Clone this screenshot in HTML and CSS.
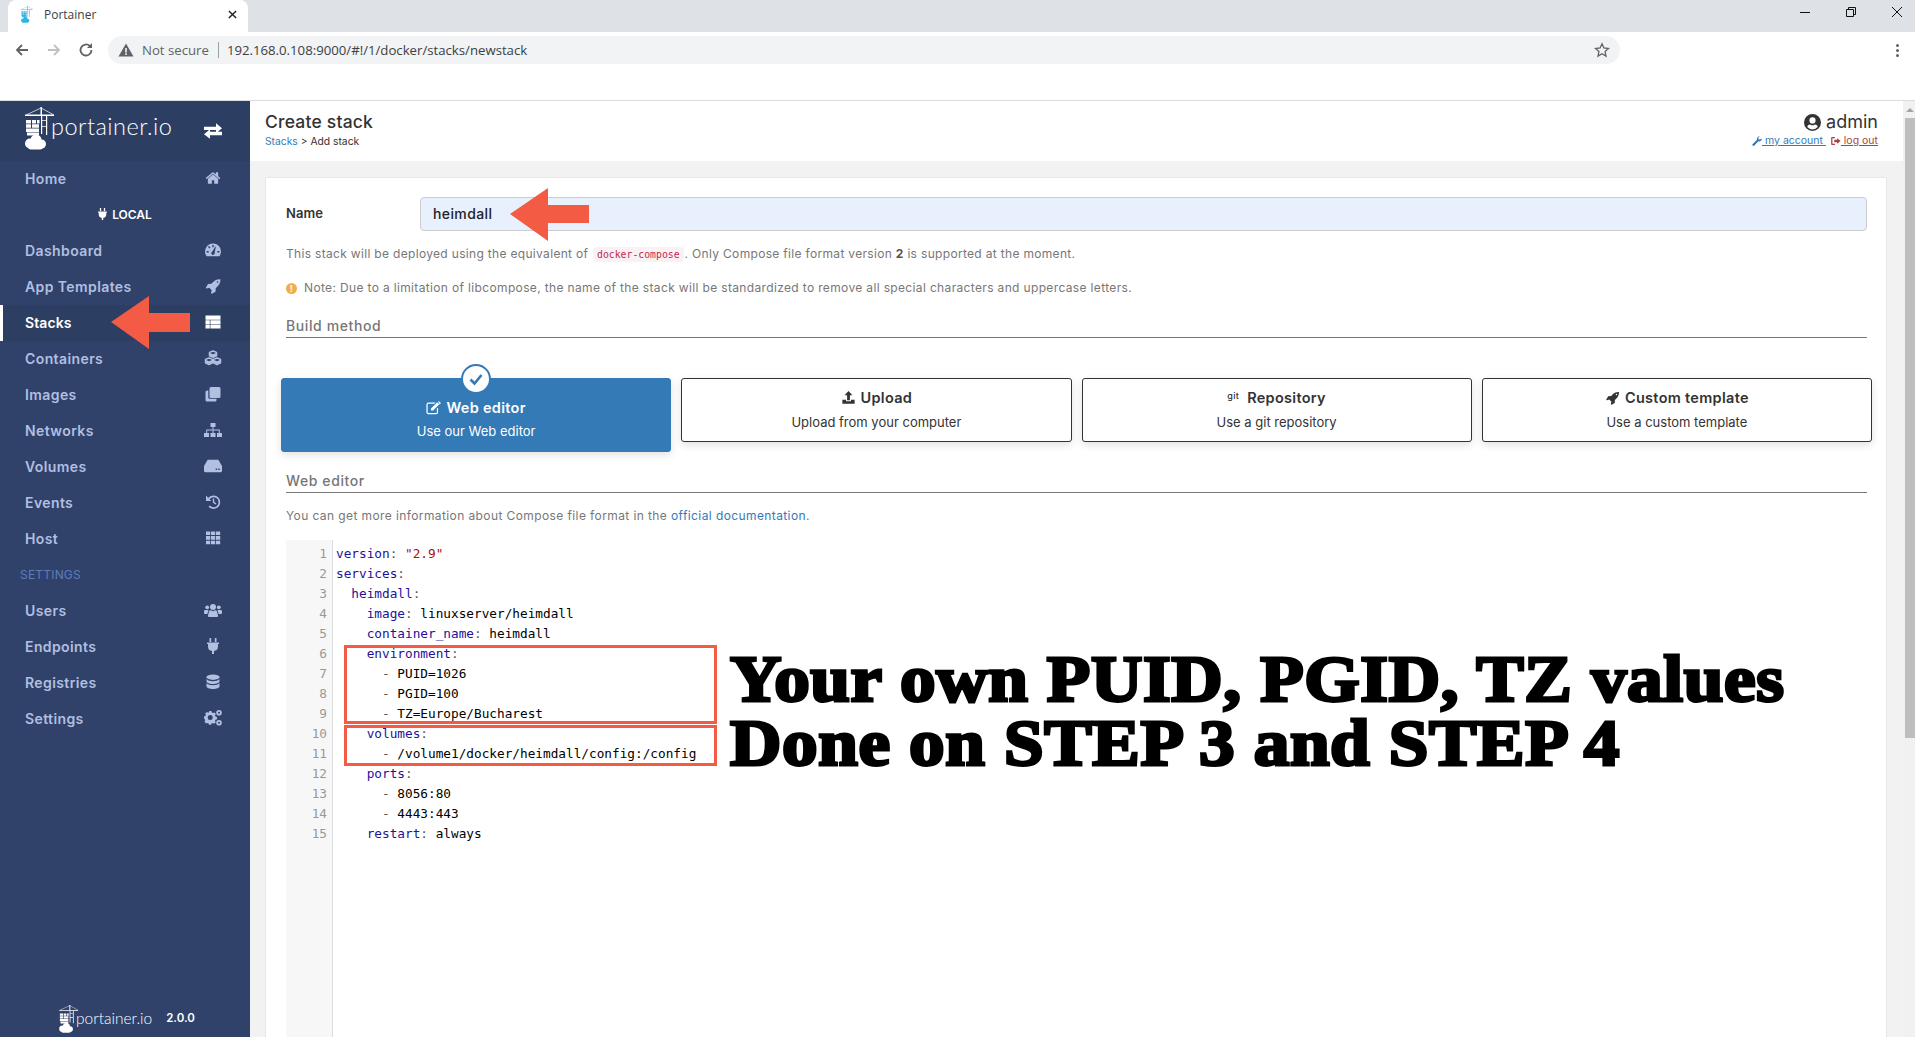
FILE: index.html
```html
<!DOCTYPE html>
<html lang="en">
<head>
<meta charset="utf-8">
<title>Portainer</title>
<link rel="stylesheet" href="styles.css">
</head>
<body>
<svg class="sprite" xmlns="http://www.w3.org/2000/svg">
  <symbol id="i-logo" viewBox="0 0 30 43">
    <path d="M0 7.500H29V9H0zM15.500 0h1.500v8h-1.500z"/>
    <path d="M1 8 16 1 29 8" fill="none" stroke="currentColor" stroke-width=".7"/>
    <path d="M16 9h1.200v18H16zM21 9h1.200v19H21zM16 13h6v.8h-6zM16 19h6v.8h-6z"/>
    <path d="M1 13h5v3.500H1zM7 13h4v3.500H7zM1 17.300h5v3.500H1zM7 17.300h7v3.500H7zM1 21.600h13v3.500H1zM12 13h2.500v3.500H12z"/>
    <path d="M2 25.500h12v3H2z"/>
    <circle cx="5" cy="36.500" r="5"/><circle cx="11" cy="33" r="5.500"/><circle cx="16.500" cy="37" r="4.500"/>
    <rect x="3" y="36" width="15" height="6.500" rx="3"/>
  </symbol>
  <symbol id="i-home" viewBox="0 0 1792 1792"><path d="M1472 992v480q0 26-19 45t-45 19h-384v-384h-256v384h-384q-26 0-45-19t-19-45v-480q0-1 .5-3t.5-3l575-474 575 474q1 2 1 6zm223-69l-62 74q-8 9-21 11h-3q-13 0-21-7l-692-577-692 577q-12 8-24 7-13-2-21-11l-62-74q-8-10-7-23.500t11-21.500l719-599q32-26 76-26t76 26l244 204v-195q0-14 9-23t23-9h192q14 0 23 9t9 23v408l219 182q10 8 11 21.500t-7 23.500z"/></symbol>
  <symbol id="i-rocket" viewBox="0 0 1792 1792"><path d="M1504 448q0-40-28-68t-68-28-68 28-28 68 28 68 68 28 68-28 28-68zm224-288q0 249-75.500 430.500t-253.500 360.500q-81 80-195 176l-20 379q-2 16-16 26l-384 224q-7 4-16 4-12 0-23-9l-64-64q-13-14-8-32l85-276-281-281-276 85q-3 1-9 1-14 0-23-9l-64-64q-17-19-5-39l224-384q10-14 26-16l379-20q96-114 176-195 188-187 358-258t431-71q14 0 24 9.500t10 22.500z"/></symbol>
  <symbol id="i-gauge" viewBox="0 0 16 16"><path fill-rule="evenodd" d="M8 1.500a7.800 7.800 0 0 1 8 7.800c0 1.900-.6 3.500-1.600 4.900H1.600A8 8 0 0 1 0 9.300 7.800 7.800 0 0 1 8 1.500zM7.300 3v2.200h1.400V3zM3 5l1.500 1.500 1-1L4 4zM11 4 9.800 5.400 7.400 9.600a1.700 1.700 0 1 0 2.300 1.200zM1.500 9v1.400h2.200V9zM12.300 9v1.400h2.200V9z"/></symbol>
  <symbol id="i-table" viewBox="0 0 16 16"><path d="M.5 1.500h15v4.200H.5zM.5 6.300h4.300v3.700H.5zM5.400 6.300h10.100v3.700H5.400zM.5 10.600h4.300v3.900H.5zM5.400 10.600h10.100v3.900H5.400z"/></symbol>
  <symbol id="i-cubes" viewBox="0 0 18 16"><g fill="none" stroke="currentColor" stroke-width="1.500" stroke-linejoin="round"><path d="m9 1 3.500 1.400v3.400L9 7.200 5.500 5.800V2.400z"/><path d="m5 8 3.500 1.400v3.400L5 14.500l-3.500-1.700V9.400z"/><path d="m13 8 3.500 1.400v3.400L13 14.500l-3.500-1.700V9.400z"/></g><path d="M6 3 9 4.200 12 3v2.500L9 7 6 5.500zM2 10l3 1.200L8 10v2.500L5 14l-3-1.500zM10 10l3 1.200 3-1.200v2.500L13 14l-3-1.500z"/></symbol>
  <symbol id="i-clone" viewBox="0 0 16 16"><path d="M6 1h8a1.500 1.500 0 0 1 1.500 1.500v8A1.500 1.500 0 0 1 14 12H6a1.500 1.500 0 0 1-1.500-1.500v-8A1.500 1.500 0 0 1 6 1z"/><path d="M3.300 4.500v7a1.200 1.200 0 0 0 1.200 1.200h7V14a1.500 1.500 0 0 1-1.500 1.500H2A1.500 1.500 0 0 1 .5 14V6A1.500 1.500 0 0 1 2 4.500z"/></symbol>
  <symbol id="i-sitemap" viewBox="0 0 18 16"><path d="M6.500 1h5v4h-5zM0 11h5v4H0zM6.500 11h5v4h-5zM13 11h5v4h-5z"/><path d="M8.500 5h1v2.500h6.300V11h-1V8.500H9.500V11h-1V8.500H3.200V11h-1V7.500h6.300z"/></symbol>
  <symbol id="i-hdd" viewBox="0 0 17 14"><path fill-rule="evenodd" d="M3.500 1h10L17 7v4.500a1.500 1.500 0 0 1-1.500 1.500h-14A1.500 1.500 0 0 1 0 11.500V7zM11 9.300v1.400h1.400V9.300zM13.500 9.300v1.400h1.400V9.300z"/></symbol>
  <symbol id="i-history" viewBox="0 0 16 16"><path d="M8.500 1.500a6.700 6.700 0 1 1-5 11.200l1.300-1.200A5 5 0 1 0 4.500 5.200L3 4a6.700 6.700 0 0 1 5.500-2.500z"/><path d="M7.800 4.500h1.400v3.300l2.200 1.700-.9 1.100-2.700-2.100z"/><path d="M1 1.500 6.300 7H1z"/></symbol>
  <symbol id="i-th" viewBox="0 0 16 16"><path d="M1 1.500h4.200v3.600H1zM6 1.500h4.200v3.600H6zM11 1.500h4.200v3.600H11zM1 6.100h4.200v3.600H1zM6 6.100h4.200v3.600H6zM11 6.100h4.200v3.600H11zM1 10.700h4.200v3.600H1zM6 10.700h4.200v3.600H6zM11 10.700h4.200v3.600H11z"/></symbol>
  <symbol id="i-users" viewBox="0 0 18 14"><circle cx="9" cy="4" r="3"/><path d="M5 8.500a2 2 0 0 1 2-1.300l2 1 2-1a2 2 0 0 1 2 1.300l1 4a1 1 0 0 1-1 1.500H5a1 1 0 0 1-1-1.500z"/><circle cx="3.200" cy="4.300" r="1.900"/><circle cx="14.800" cy="4.300" r="1.900"/><path d="M0 10v-1.500C0 7 1 6.700 3 7l1.600.2-1.300 3.800H1a1 1 0 0 1-1-1zM18 10V8.500C18 7 17 6.700 15 7l-1.600.2 1.300 3.800H17a1 1 0 0 0 1-1z"/></symbol>
  <symbol id="i-plug" viewBox="0 0 12 16"><path d="M2.500 0h1.700v4H2.500zM7.800 0h1.700v4H7.800zM0 4.500h12v1.500H11v2.500A4.500 4.500 0 0 1 7 13v3H5v-3A4.500 4.500 0 0 1 1 8.500V6H0z"/></symbol>
  <symbol id="i-db" viewBox="0 0 14 16"><ellipse cx="7" cy="3.200" rx="6.500" ry="2.700"/><path d="M.5 5c1 1.600 3.600 2.200 6.500 2.200S12.500 6.600 13.500 5v2.300C13.500 9 10.600 10 7 10S.5 9 .5 7.300z"/><path d="M.5 9c1 1.600 3.600 2.200 6.500 2.200s5.500-.6 6.500-2.200v3.300C13.500 14 10.600 15 7 15S.5 14 .5 12.300z"/></symbol>
  <symbol id="i-cogs" viewBox="0 0 18 16"><path fill-rule="evenodd" d="M5 3h2.400l.4 1.500 1.300.6 1.400-.7 1.400 1.600-.9 1.300.5 1.300 1.500.5v2.100l-1.500.5-.5 1.300.8 1.300-1.600 1.500-1.300-.8-1.300.5-.5 1.300H5l-.4-1.400-1.300-.5-1.300.7L.5 13.500l.7-1.300-.5-1.300L0 10.600V8.400l1.400-.4.5-1.300-.7-1.300L2.800 4l1.300.7 1-.5zM6.200 7a2.500 2.500 0 1 0 0 5 2.500 2.500 0 0 0 0-5z" transform="translate(0 -2)"/><path fill-rule="evenodd" d="M15 0a2.800 2.800 0 1 1 0 5.600A2.800 2.800 0 0 1 15 0zm0 1.800a1 1 0 1 0 0 2 1 1 0 0 0 0-2zM15 10a2.800 2.800 0 1 1 0 5.600 2.800 2.800 0 0 1 0-5.600zm0 1.800a1 1 0 1 0 0 2 1 1 0 0 0 0-2z"/></symbol>
  <symbol id="i-swap" viewBox="0 0 18 16"><path d="M0 3.500h12V0l6 5-6 5V6.800H0zM18 8.500V12H6v3.500L0 11l6-5v2.500z" transform="translate(0 .3)"/></symbol>
  <symbol id="i-edit" viewBox="0 0 18 16"><path d="M3 1.500h8.500L10 3H3a1 1 0 0 0-1 1v9a1 1 0 0 0 1 1h9a1 1 0 0 0 1-1V9l1.500-1.500V13a2.500 2.500 0 0 1-2.500 2.500H3A2.500 2.500 0 0 1 .5 13V4A2.500 2.500 0 0 1 3 1.500z"/><path d="M6 8.500 13.500 1 16 3.500 8.500 11H6zM14.500 0l1-.2 2 2v1l-1 1z"/></symbol>
  <symbol id="i-upload" viewBox="0 0 14 16"><path d="M7 0l4.500 4.800H8.600V10.500H5.400V4.800H2.500zM0 10h4.200v1.700h5.600V10H14v4.500H0z"/></symbol>
  <symbol id="i-wrench" viewBox="0 0 14 14"><path d="M14 3.500A4 4 0 0 1 9 7.400L3 13.500a1.400 1.400 0 0 1-2-.1 1.400 1.400 0 0 1-.2-2L7 5.200A4 4 0 0 1 11 .2L8.800 2.500l.4 2 2 .5z"/></symbol>
  <symbol id="i-signout" viewBox="0 0 14 14"><path d="M1.500 1.500h4v1.600h-3.500v7.800H5.500v1.600h-4A1.300 1.300 0 0 1 .2 11.200V2.800a1.300 1.300 0 0 1 1.300-1.300z"/><path d="M8.500 3 13.500 7l-5 4V8.800H4.500V5.200H8.500z"/></symbol>
  <symbol id="i-user" viewBox="0 0 18 18"><path fill-rule="evenodd" d="M9 0a9 9 0 1 1 0 18A9 9 0 0 1 9 0zm0 3.500a3.300 3.300 0 1 0 0 6.600 3.300 3.300 0 0 0 0-6.600zM3.500 13.800A7 7 0 0 0 9 16.300a7 7 0 0 0 5.500-2.500 3 3 0 0 0-3-2.800 4.300 4.300 0 0 1-5 0 3 3 0 0 0-3 2.800z"/></symbol>
</svg>

<header class="tabstrip">
  <div class="tab">
    <svg class="tab-icon"><use href="#i-logo"/></svg>
    <span class="tab-title">Portainer</span>
    <span class="tab-close">
      <svg viewBox="0 0 10 10" class="x-icon"><path d="M1 1l8 8M9 1l-8 8"/></svg>
    </span>
  </div>
  <div class="win-controls">
    <svg viewBox="0 0 12 12" class="win"><path d="M1 6.500h10"/></svg>
    <svg viewBox="0 0 12 12" class="win"><path d="M1.500 3.500h7v7h-7zM3.500 3.500v-2h7v7h-2"/></svg>
    <svg viewBox="0 0 12 12" class="win"><path d="M1 1l10 10M11 1 1 11"/></svg>
  </div>
</header>
<div class="toolbar">
  <svg viewBox="0 0 16 16" class="nav"><path d="M14 8H3M8 3 3 8l5 5"/></svg>
  <svg viewBox="0 0 16 16" class="nav nav-off"><path d="M2 8h11M8 3l5 5-5 5"/></svg>
  <svg viewBox="0 0 16 16" class="nav"><path d="M13.500 8a5.500 5.500 0 1 1-1.600-3.900"/><path class="nav-fill" d="M14 1v5H9z"/></svg>
  <div class="omnibox">
    <svg viewBox="0 0 16 16" class="warn"><path d="M8 1.500 15.500 14.500H.5zM7.200 6v4.500h1.600V6zM7.200 11.300v1.600h1.600v-1.600z" fill-rule="evenodd"/></svg>
    <span class="not-secure">Not secure</span>
    <span class="omni-sep"></span>
    <span class="url">192.168.0.108:9000/#!/1/docker/stacks/newstack</span>
    <svg viewBox="0 0 16 16" class="star"><path d="m8 1.800 1.900 4.200 4.600.5-3.400 3.100.9 4.500L8 11.800l-4 2.300.9-4.500L1.500 6.500 6.100 6z"/></svg>
  </div>
  <div class="dots"><i></i><i></i><i></i></div>
</div>

<div class="app">
  <aside class="sidebar">
    <div class="brand">
      <svg class="brand-logo"><use href="#i-logo"/></svg>
      <span class="brand-text">portainer.io</span>
      <svg class="brand-swap"><use href="#i-swap"/></svg>
    </div>
    <nav class="nav-list">
      <a class="nav-item"><span>Home</span><svg class="ni"><use href="#i-home"/></svg></a>
      <div class="nav-local"><svg class="plug"><use href="#i-plug"/></svg>LOCAL</div>
      <a class="nav-item"><span>Dashboard</span><svg class="ni"><use href="#i-gauge"/></svg></a>
      <a class="nav-item"><span>App Templates</span><svg class="ni"><use href="#i-rocket"/></svg></a>
      <a class="nav-item active"><span>Stacks</span><svg class="ni"><use href="#i-table"/></svg></a>
      <a class="nav-item"><span>Containers</span><svg class="ni"><use href="#i-cubes"/></svg></a>
      <a class="nav-item"><span>Images</span><svg class="ni"><use href="#i-clone"/></svg></a>
      <a class="nav-item"><span>Networks</span><svg class="ni"><use href="#i-sitemap"/></svg></a>
      <a class="nav-item"><span>Volumes</span><svg class="ni"><use href="#i-hdd"/></svg></a>
      <a class="nav-item"><span>Events</span><svg class="ni"><use href="#i-history"/></svg></a>
      <a class="nav-item"><span>Host</span><svg class="ni"><use href="#i-th"/></svg></a>
      <div class="nav-title">SETTINGS</div>
      <a class="nav-item"><span>Users</span><svg class="ni"><use href="#i-users"/></svg></a>
      <a class="nav-item"><span>Endpoints</span><svg class="ni"><use href="#i-plug"/></svg></a>
      <a class="nav-item"><span>Registries</span><svg class="ni"><use href="#i-db"/></svg></a>
      <a class="nav-item"><span>Settings</span><svg class="ni"><use href="#i-cogs"/></svg></a>
    </nav>
    <div class="side-foot">
      <svg class="foot-logo"><use href="#i-logo"/></svg>
      <span class="foot-text">portainer.io</span>
      <span class="foot-ver">2.0.0</span>
    </div>
  </aside>

  <main class="main">
    <div class="page-head">
      <div>
        <div class="page-title">Create stack</div>
        <div class="crumbs"><a class="link">Stacks</a> &gt; Add stack</div>
      </div>
      <div class="account">
        <div class="acc-user"><svg class="acc-icon"><use href="#i-user"/></svg>admin</div>
        <div class="acc-links">
          <svg class="mini blue"><use href="#i-wrench"/></svg><a class="u blue">&nbsp;my account&nbsp;</a>
          <svg class="mini red gap"><use href="#i-signout"/></svg><a class="u red">&nbsp;log out</a>
        </div>
      </div>
    </div>
    <div class="content">
      <section class="card">
        <div class="name-row">
          <label class="name-label">Name</label>
          <div class="name-input">heimdall</div>
        </div>
        <p class="help first">This stack will be deployed using the equivalent of <code class="inline">docker-compose</code>. Only Compose file format version <b>2</b> is supported at the moment.</p>
        <p class="help note"><span class="note-dot">!</span>Note: Due to a limitation of libcompose, the name of the stack will be standardized to remove all special characters and uppercase letters.</p>
        <h3 class="section build">Build method</h3>
        <div class="methods">
          <div class="method on">
            <span class="check"><svg viewBox="0 0 16 16"><path d="M2.500 8.500 6.500 12.500 13.500 4"/></svg></span>
            <div class="m-title"><svg class="m-icon"><use href="#i-edit"/></svg>Web editor</div>
            <div class="m-sub">Use our Web editor</div>
          </div>
          <div class="method">
            <div class="m-title"><svg class="m-icon"><use href="#i-upload"/></svg>Upload</div>
            <div class="m-sub">Upload from your computer</div>
          </div>
          <div class="method">
            <div class="m-title"><span class="git">git</span>Repository</div>
            <div class="m-sub">Use a git repository</div>
          </div>
          <div class="method">
            <div class="m-title"><svg class="m-icon"><use href="#i-rocket"/></svg>Custom template</div>
            <div class="m-sub">Use a custom template</div>
          </div>
        </div>
        <h3 class="section web">Web editor</h3>
        <p class="help info">You can get more information about Compose file format in the <a class="link">official documentation</a>.</p>
        <div class="editor">
          <div class="gutter">
            <div>1</div><div>2</div><div>3</div><div>4</div><div>5</div><div>6</div><div>7</div><div>8</div><div>9</div><div>10</div><div>11</div><div>12</div><div>13</div><div>14</div><div>15</div>
          </div>
          <div class="code">
            <div><span class="k">version</span><span class="m">:</span> <span class="s">"2.9"</span></div>
            <div><span class="k">services</span><span class="m">:</span></div>
            <div>  <span class="k">heimdall</span><span class="m">:</span></div>
            <div>    <span class="k">image</span><span class="m">:</span> linuxserver/heimdall</div>
            <div>    <span class="k">container_name</span><span class="m">:</span> heimdall</div>
            <div>    <span class="k">environment</span><span class="m">:</span></div>
            <div>      <span class="m">-</span> PUID=1026</div>
            <div>      <span class="m">-</span> PGID=100</div>
            <div>      <span class="m">-</span> TZ=Europe/Bucharest</div>
            <div>    <span class="k">volumes</span><span class="m">:</span></div>
            <div>      <span class="m">-</span> /volume1/docker/heimdall/config:/config</div>
            <div>    <span class="k">ports</span><span class="m">:</span></div>
            <div>      <span class="m">-</span> 8056:80</div>
            <div>      <span class="m">-</span> 4443:443</div>
            <div>    <span class="k">restart</span><span class="m">:</span> always</div>
          </div>
        </div>
      </section>
    </div>
  </main>

  <div class="scrollbar">
    <span class="sb-up"></span>
    <div class="sb-thumb"></div>
  </div>
</div>

<svg class="marks" viewBox="0 0 1915 1037" xmlns="http://www.w3.org/2000/svg">
  <path class="arrow" d="M510 214 548 188V205H589V223H548V241z"/>
  <path class="arrow" d="M111 322 149 296V313H190V332H149V349z"/>
  <rect class="box" x="345.500" y="646.500" width="370" height="76"/>
  <rect class="box" x="345.500" y="726.500" width="370" height="38"/>
</svg>
<div class="shout">Your own PUID, PGID, TZ values<br>Done on STEP 3 and STEP 4</div>
</body>
</html>
```
FILE: styles.css
```css
* { box-sizing: border-box; }
html, body { margin: 0; height: 100%; }
body {
  position: relative;
  width: 1915px;
  height: 1037px;
  overflow: hidden;
  background: #fff;
  font-family: Inter, "Liberation Sans", sans-serif;
  color: #333;
  display: flex;
  flex-direction: column;
}
.sprite { display: none; }
svg { fill: currentColor; flex: none; }
a { text-decoration: none; }

/* browser chrome */
.tabstrip {
  height: 32px;
  flex: none;
  background: #dee1e6;
  display: flex;
  padding-left: 8px;
  justify-content: space-between;
}
.tab {
  width: 240px;
  height: 32px;
  background: #fff;
  border-radius: 8px 8px 0 0;
  display: flex;
  align-items: center;
  padding: 0 0 3px 13px;
  font: 12px "Open Sans", sans-serif;
  color: #3c4043;
}
.tab-icon { width: 12px; height: 17px; color: #29b6e8; }
.tab-title { margin-left: 11px; flex: 1; }
.tab-close { width: 32px; display: flex; justify-content: center; }
.x-icon { width: 9px; height: 9px; fill: none; stroke: #222; stroke-width: 1.6; }
.win-controls { display: flex; padding-right: 12px; padding-top: 6px; gap: 34px; }
.win { width: 12px; height: 12px; fill: none; stroke: #111; stroke-width: 1; }

.toolbar {
  height: 69px;
  flex: none;
  display: flex;
  align-items: flex-start;
  padding: 4px 0 0 14px;
  border-bottom: 1px solid #dadce0;
  position: relative;
}
.nav { width: 16px; height: 16px; margin: 6px 16px 0 0; fill: none; stroke: #5f6368; stroke-width: 1.800; }
.nav-off { stroke: #bdc1c6; }
.nav-fill { fill: #5f6368; stroke: none; }
.omnibox {
  width: 1512px;
  height: 28px;
  margin-left: -2px;
  background: #f1f3f4;
  border-radius: 14px;
  display: flex;
  align-items: center;
  padding-left: 10px;
  font: 13.200px "Open Sans", sans-serif;
  color: #5f6368;
}
.warn { width: 16px; height: 16px; fill: #5f6368; }
.not-secure { margin-left: 8px; }
.omni-sep { width: 1px; height: 16px; background: #9aa0a6; margin: 0 8px 0 9px; }
.url { color: #3c4043; flex: 1; }
.star { width: 16px; height: 16px; margin-right: 10px; fill: none; stroke: #5f6368; stroke-width: 1.300; }
.dots { position: absolute; left: 1896px; top: 12px; display: flex; flex-direction: column; gap: 2px; }
.dots i { width: 3px; height: 3px; border-radius: 50%; background: #5f6368; display: block; }

/* application */
.app { flex: 1; min-height: 0; display: flex; }
.sidebar {
  width: 250px;
  flex: none;
  background: #30426a;
  display: flex;
  flex-direction: column;
  color: #b1bfe0;
}
.brand {
  height: 60px;
  flex: none;
  background: #2d3e63;
  color: #fff;
  position: relative;
  display: flex;
  align-items: flex-start;
  padding: 6px 0 0 25px;
}
.brand-logo { width: 30px; height: 43px; }
.brand-text {
  margin-left: -4px;
  margin-top: 4px;
  font: 300 23.500px/30px Lato, sans-serif;
  letter-spacing: .5px;
}
.brand-swap { position: absolute; left: 204px; top: 22px; width: 18px; height: 16px; }
.nav-list { flex: 1; }
.nav-item {
  height: 36px;
  display: flex;
  align-items: center;
  justify-content: space-between;
  padding: 0 28px 2px 25px;
  font-size: 14px;
  font-weight: 600;
  letter-spacing: .4px;
}
.nav-item.active {
  background: #2d3e63;
  border-left: 3px solid #fff;
  padding-left: 22px;
  color: #fff;
  letter-spacing: .1px;
}
.ni { width: 18px; height: 16px; }
.nav-local {
  height: 36px;
  display: flex;
  align-items: center;
  justify-content: center;
  gap: 5px;
  padding-bottom: 2px;
  color: #fff;
  font-size: 12px;
  font-weight: 600;
}
.plug { width: 9px; height: 14px; }
.nav-title {
  height: 36px;
  line-height: 36px;
  padding-left: 20px;
  font-size: 12px;
  letter-spacing: .2px;
  color: #5c7cbc;
}
.side-foot {
  height: 36px;
  flex: none;
  position: relative;
  color: #fff;
  display: flex;
  align-items: flex-start;
  padding: 4px 0 0 59px;
}
.foot-logo { width: 20px; height: 28px; }
.foot-text { margin-left: -3px; margin-top: 3px; font: 300 15.500px/20px Lato, sans-serif; }
.foot-ver { margin-left: 14px; margin-top: 3px; font-size: 11.500px; font-weight: 600; line-height: 20px; }

.main { flex: 1; min-width: 0; display: flex; flex-direction: column; }
.page-head {
  height: 60px;
  flex: none;
  background: #fff;
  padding: 9px 25px 0 15px;
  display: flex;
  justify-content: space-between;
}
.page-title { font-size: 17.500px; font-weight: 500; line-height: 24px; color: #333; letter-spacing: .2px; }
.crumbs { font-size: 10.300px; line-height: 14px; color: #333; }
.link { color: #337ab7; }
.account { text-align: right; }
.acc-user {
  font-size: 18px;
  line-height: 24px;
  display: flex;
  justify-content: flex-end;
  align-items: center;
  gap: 5px;
}
.acc-icon { width: 17px; height: 17px; }
.acc-links { font-size: 10.500px; line-height: 14px; display: flex; justify-content: flex-end; align-items: center; white-space: pre; }
.blue { color: #337ab7; }
.red { color: #a94442; }
.u { text-decoration: underline; }
.mini { width: 10px; height: 10px; }
.gap { margin-left: 5px; }

.content { flex: 1; min-height: 0; background: #f2f2f2; padding: 16px 16px 0 15px; overflow: hidden; }
.card {
  background: #fff;
  border: 1px solid #e8e8e8;
  border-bottom: 0;
  padding: 19px 19px 0 20px;
  height: 900px;
}
.name-row { display: flex; align-items: center; height: 34px; }
.name-label { width: 134px; font-size: 13px; font-weight: 600; color: #333; padding-bottom: 2px; letter-spacing: .1px; }
.name-input {
  flex: 1;
  height: 34px;
  background: #e8f0fe;
  border: 1px solid #ccc;
  border-radius: 4px;
  padding-left: 12px;
  font-size: 14px;
  letter-spacing: .4px;
  line-height: 32px;
  font-weight: 500;
  color: #222;
}
.help {
  margin: 12px 0 0;
  font-size: 12px;
  line-height: 22px;
  color: #777;
  letter-spacing: .32px;
  display: flex;
  align-items: center;
  white-space: pre;
}
.help.note { letter-spacing: .35px; }
.help b { color: #555; }
.inline {
  font: 9.800px "DejaVu Sans Mono", monospace;
  letter-spacing: 0;
  background: #f9f2f4;
  color: #c7254e;
  padding: 2px 4px;
  border-radius: 4px;
  margin: 0 1px;
}
.note-dot {
  width: 11px;
  height: 11px;
  border-radius: 50%;
  background: #f0ad4e;
  color: #fff;
  font-size: 9px;
  font-weight: 700;
  line-height: 11px;
  text-align: center;
  margin-right: 7px;
}
.section {
  margin: 0;
  font-size: 14px;
  font-weight: 500;
  letter-spacing: .6px;
  line-height: 20px;
  color: #767676;
  border-bottom: 1px solid #777;
  height: 22px;
}
.build { margin-top: 17px; }
.web { margin-top: 19px; }
.methods {
  display: grid;
  grid-template-columns: repeat(4, 1fr);
  gap: 10px;
  align-items: start;
  margin: 40px -5px 0;
}
.method {
  height: 64px;
  border: 1px solid #333;
  border-radius: 3px;
  background: #fff;
  box-shadow: 0 3px 8px rgba(0,0,0,.12);
  text-align: center;
  padding-top: 9px;
  color: #333;
}
.method.on {
  height: 74px;
  background: #337ab7;
  border-color: #337ab7;
  color: #fff;
  position: relative;
  padding-top: 19px;
}
.check {
  position: absolute;
  left: 50%;
  top: -15px;
  width: 30px;
  height: 30px;
  margin-left: -15px;
  border-radius: 50%;
  background: #fff;
  border: 2px solid #337ab7;
  display: flex;
  align-items: center;
  justify-content: center;
}
.check svg { width: 16px; height: 16px; fill: none; stroke: #337ab7; stroke-width: 2.600; }
.m-title {
  font-size: 14.500px;
  font-weight: 600;
  letter-spacing: .3px;
  line-height: 20px;
  display: flex;
  align-items: center;
  justify-content: center;
  gap: 5px;
}
.m-icon { width: 15px; height: 14px; }
.git { font-size: 9px; font-weight: 500; margin-right: 3px; position: relative; top: -2px; }
.m-sub { font-size: 13px; line-height: 16px; margin-top: 6px; }
.on .m-sub { margin-top: 5px; }
.info { margin-top: 12px; letter-spacing: .4px; }
.editor { display: flex; margin-top: 13px; height: 500px; }
.gutter {
  width: 47px;
  flex: none;
  background: #f7f7f7;
  border-right: 1px solid #ddd;
  color: #999;
  font: 12.740px/20px "DejaVu Sans Mono", monospace;
  text-align: right;
  padding: 4px 5px 0 0;
}
.code {
  padding: 4px 0 0 3px;
  font: 12.740px/20px "DejaVu Sans Mono", monospace;
  color: #000;
}
.code div { white-space: pre; height: 20px; }
.k { color: #221199; }
.m { color: #555; }
.s { color: #aa1111; }

.scrollbar { width: 12px; flex: none; background: #f1f1f1; position: relative; padding: 17px 0 0 2px; }
.sb-up {
  position: absolute;
  left: 3px;
  top: 7px;
  border: 4px solid transparent;
  border-top: 0;
  border-bottom: 4px solid #a3a3a3;
}
.sb-thumb { height: 620px; background: #bebebe; }

/* annotations laid over the screenshot */
.marks { position: absolute; left: 0; top: 0; width: 1915px; height: 1037px; pointer-events: none; }
.arrow { fill: #f35b45; }
.box { fill: none; stroke: #f35b45; stroke-width: 3; }
.shout {
  position: absolute;
  left: 730px;
  top: 647px;
  font: 700 66px/64px "Liberation Serif", serif;
  color: #000;
  -webkit-text-stroke: 3px #000;
  letter-spacing: .6px;
  white-space: nowrap;
  transform: scaleX(1.078);
  transform-origin: left top;
}
```
